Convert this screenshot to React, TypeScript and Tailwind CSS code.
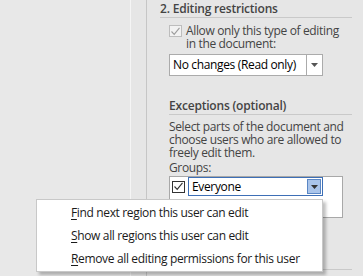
import React from 'react';

const font = { fontFamily: '"Open Sans", "Noto Sans", sans-serif' };

const Check = ({ color }: { color: string }) => (
  <svg width="11" height="11" viewBox="0 0 11 11" className="block">
    <path d="M1.5 5.5 L4.2 8.3 L9.5 1.8" fill="none" stroke={color} strokeWidth="1.1" />
  </svg>
);

const MenuItem = ({ hot, rest }: { hot: string; rest: string }) => (
  <div className="flex h-[23px] items-center whitespace-nowrap pl-[34px] text-[12px] tracking-[-0.35px] text-[#1a1a1a]">
    <span className="underline underline-offset-2">{hot}</span>
    {rest}
  </div>
);

export default function App() {
  return (
    <div
      className="relative flex h-[276px] w-[363px] overflow-hidden bg-[#e6e6e6] text-[#444]"
      style={font}
    >
      <div className="w-[130px] shrink-0 bg-[#e8e8e8]" />
      <div className="w-px shrink-0 bg-[#f5f5f5]" />
      <div className="w-[15px] shrink-0 bg-[#e6e6e6]" />
      <div className="w-px shrink-0 bg-[#c6c6c6]" />

      <div className="flex min-w-0 flex-1 flex-col whitespace-nowrap pl-[13px] pr-[11px] text-[12px] tracking-[-0.35px]">
        <div className="h-[18px] border-b border-[#c9c9c9] font-semibold leading-[17px] tracking-[-0.2px] text-[#444]">
          2. Editing restrictions
        </div>

        <div className="pl-[9px]">
          <div className="mt-[6px] flex gap-[4px]">
            <div className="mt-[1px] flex h-[12px] w-[13px] shrink-0 items-center justify-center border border-[#bdbdbd] bg-[#f2f2f2]">
              <Check color="#9c9c9c" />
            </div>
            <div className="leading-[13px]">
              Allow only this type of editing
              <br />
              in the document:
            </div>
          </div>

          <div className="mt-[4px] flex h-[22px] w-[154px] border border-[#ababab] bg-white">
            <div className="flex flex-1 items-center pl-[3px] text-black">
              No changes (Read only)
            </div>
            <div className="flex w-[16px] items-center justify-center border-l border-[#ababab]">
              <svg width="7" height="4" viewBox="0 0 7 4">
                <path d="M0 0 H7 L3.5 4 Z" fill="#555" />
              </svg>
            </div>
          </div>

          <div className="mt-[21px] h-[18px] border-b border-[#c9c9c9] font-semibold leading-[17px] tracking-[-0.2px] text-[#444]">
            Exceptions (optional)
          </div>

          <div className="mt-[5px] leading-[13px]">
            Select parts of the document and
            <br />
            choose users who are allowed to
            <br />
            freely edit them.
          </div>

          <div className="mt-[2px] leading-[13px]">Groups:</div>

          <div className="mt-[2px] h-[42px] w-[174px] border border-[#a8a8a8] bg-white pl-[2px]">
            <div className="flex items-center gap-[3px]">
              <div className="flex h-[12px] w-[13px] shrink-0 items-center justify-center border border-[#333]">
                <Check color="#333" />
              </div>
              <div className="flex h-[19px] w-[135px] border border-[#3d6fb6] bg-white">
                <div className="flex flex-1 items-center pl-[3px] text-black">Everyone</div>
                <div className="my-[1px] mr-[1px] flex w-[14px] items-center justify-center border border-[#5a86c4] bg-[#a9c4ea]">
                  <svg width="7" height="4" viewBox="0 0 7 4">
                    <path d="M0 0 H7 L3.5 4 Z" fill="#333" />
                  </svg>
                </div>
              </div>
            </div>
          </div>
        </div>

        <div className="mt-[51px] border-b border-[#c9c9c9]" />
      </div>

      <div className="absolute left-[36px] top-[199px] w-[287px] border border-[#c8c8c8] bg-white py-[1px] shadow-[3px_3px_3px_rgba(0,0,0,0.25)]">
        <MenuItem hot="F" rest="ind next region this user can edit" />
        <MenuItem hot="S" rest="how all regions this user can edit" />
        <MenuItem hot="R" rest="emove all editing permissions for this user" />
      </div>
    </div>
  );
}
